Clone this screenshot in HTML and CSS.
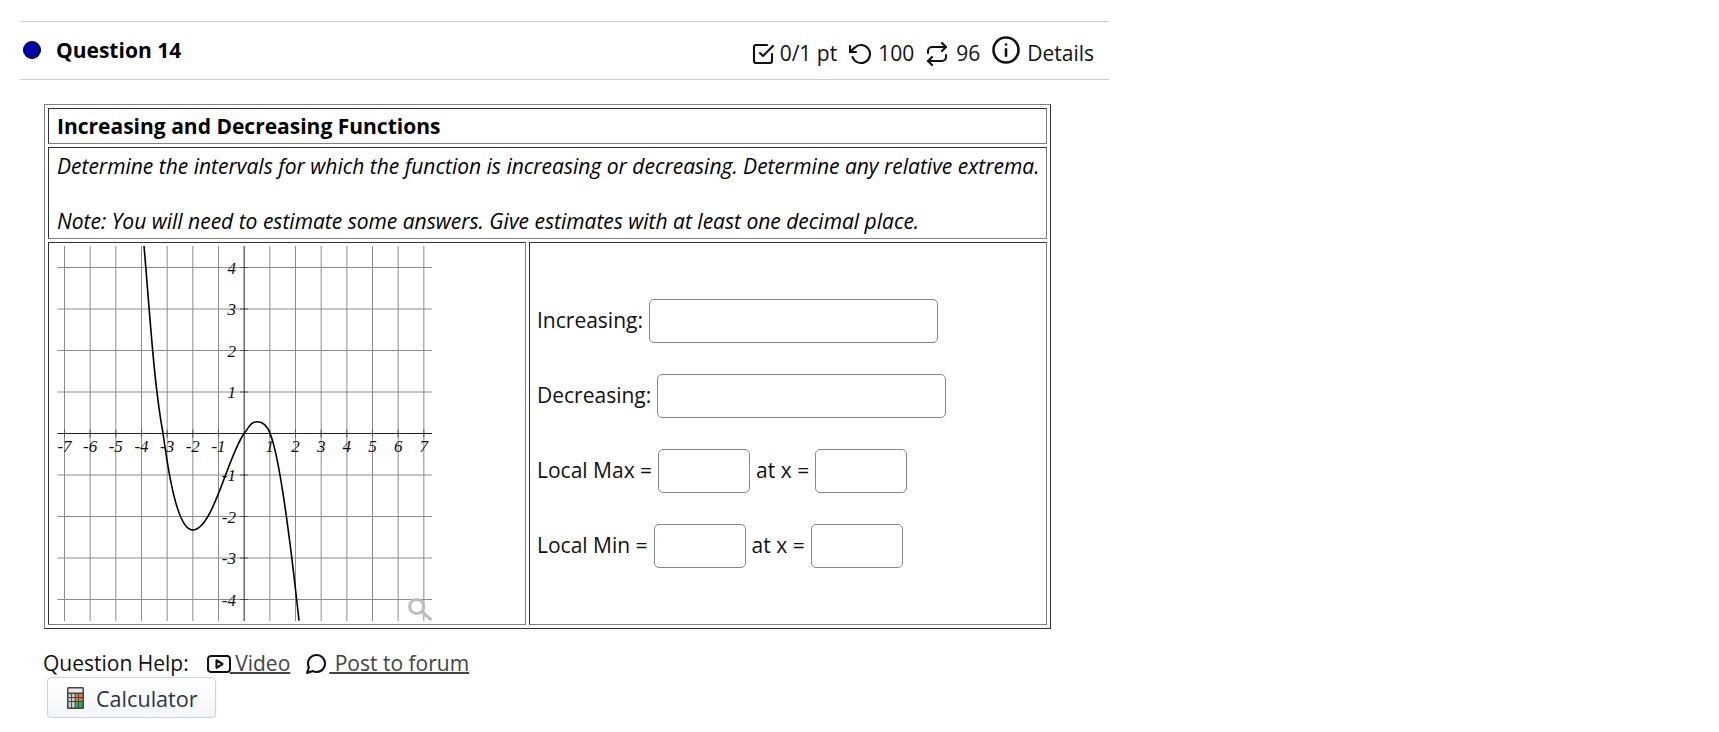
FILE: index.html
```html
<!DOCTYPE html>
<html lang="en">
<head>
<meta charset="utf-8">
<title>Question 14</title>
<link rel="stylesheet" href="styles.css">
</head>
<body>
<main class="page">
  <header class="qhead">
    <div class="qtitle"><span class="dot"></span><span class="qname">Question 14</span></div>
    <div class="qmeta">
      <svg class="ic ic-check" viewBox="0 0 24 24"><polyline points="9 11 12 14 22 4"/><path d="M21 12v7a2 2 0 0 1-2 2H5a2 2 0 0 1-2-2V5a2 2 0 0 1 2-2h11"/></svg>
      <span class="m-pt">0/1 pt</span>
      <svg class="ic ic-undo" viewBox="0 0 24 24"><polyline points="1 4 1 10 7 10"/><path d="M3.51 15a9 9 0 1 0 2.13-9.36L1 10"/></svg>
      <span class="m-tries">100</span>
      <svg class="ic ic-repeat" viewBox="0 0 24 24"><polyline points="17 1 21 5 17 9"/><path d="M3 11V9a4 4 0 0 1 4-4h14"/><polyline points="7 23 3 19 7 15"/><path d="M21 13v2a4 4 0 0 1-4 4H3"/></svg>
      <span class="m-regen">96</span>
      <svg class="ic ic-info" viewBox="0 0 24 24"><circle cx="12" cy="12" r="10"/><line x1="12" y1="16.5" x2="12" y2="11.5"/><line x1="12" y1="7.6" x2="12.01" y2="7.6"/></svg>
      <span>Details</span>
    </div>
  </header>

  <table class="qtable">
    <tr><td colspan="2" class="c-title"><strong>Increasing and Decreasing Functions</strong></td></tr>
    <tr><td colspan="2" class="c-intro"><em>Determine the intervals for which the function is increasing or decreasing. Determine any relative extrema.<br><br>Note: You will need to estimate some answers. Give estimates with at least one decimal place.</em></td></tr>
    <tr>
      <td class="c-graph">
        <svg class="graph" viewBox="49 243 476 381" role="img" aria-label="Graph of a function">
          <g class="grid">
            <path d="M64.5 246V621M90.17 246V621M115.83 246V621M141.5 246V621M167.17 246V621M192.83 246V621M218.5 246V621M269.83 246V621M295.5 246V621M321.17 246V621M346.83 246V621M372.5 246V621M398.17 246V621M423.83 246V621"/>
            <path d="M57.5 267.5H432M57.5 309H432M57.5 350.5H432M57.5 392H432M57.5 475H432M57.5 516.5H432M57.5 558H432M57.5 599.5H432"/>
          </g>
          <g class="ticks">
            <path d="M64.5 429.5v8M90.17 429.5v8M115.83 429.5v8M141.5 429.5v8M167.17 429.5v8M192.83 429.5v8M218.5 429.5v8M269.83 429.5v8M295.5 429.5v8M321.17 429.5v8M346.83 429.5v8M372.5 429.5v8M398.17 429.5v8M423.83 429.5v8"/>
            <path d="M240 267.5h8M240 309h8M240 350.5h8M240 392h8M240 475h8M240 516.5h8M240 558h8M240 599.5h8"/>
          </g>
          <path class="axis" d="M57.5 433.5H432M244.17 246V621"/>
          <g class="xl">
            <text x="64.5" y="452">-7</text><text x="90.2" y="452">-6</text><text x="115.8" y="452">-5</text><text x="141.5" y="452">-4</text><text x="167.2" y="452">-3</text><text x="192.8" y="452">-2</text><text x="218.5" y="452">-1</text><text x="269.8" y="452">1</text><text x="295.5" y="452">2</text><text x="321.2" y="452">3</text><text x="346.8" y="452">4</text><text x="372.5" y="452">5</text><text x="398.2" y="452">6</text><text x="423.8" y="452">7</text>
          </g>
          <g class="yl">
            <text x="236" y="273.5">4</text><text x="236" y="315">3</text><text x="236" y="356.5">2</text><text x="236" y="398">1</text><text x="236" y="481">-1</text><text x="236" y="522.5">-2</text><text x="236" y="564">-3</text><text x="236" y="605.5">-4</text>
          </g>
          <path class="curve" d="M144 246C150 315 154 385 163 433C168 470 177 530 192.7 530C213 530 228 455 244.3 433.3C249 427 251 421.7 257.3 421.7C264 421.7 268 428 270 433.3C277 450 287 510 299 620.7"/>
          <g class="zoom"><circle cx="416.7" cy="606.5" r="7"/><path d="M422 612L431.5 620"/></g>
        </svg>
      </td>
      <td class="c-answers">
        <div class="answers">
          <div class="row"><label>Increasing:</label><input class="wide" type="text"></div>
          <div class="row"><label>Decreasing:</label><input class="wide" type="text"></div>
          <div class="row"><label>Local Max =</label><input class="small" type="text"><span>at x =</span><input class="small" type="text"></div>
          <div class="row"><label>Local Min =</label><input class="small" type="text"><span>at x =</span><input class="small" type="text"></div>
        </div>
      </td>
    </tr>
  </table>

  <div class="help">
    <span class="help-label">Question Help:</span>
    <svg class="ic ic-video" viewBox="0 0 24 18"><rect x="1" y="1" width="22" height="16" rx="3"/><path class="fillp" d="M9.5 5.2L15.5 9L9.5 12.8Z"/></svg><a class="hlink" href="#"> Video</a>
    <svg class="ic ic-forum" viewBox="0 0 24 24"><path d="M21 11.5a8.38 8.38 0 0 1-.9 3.8 8.5 8.5 0 0 1-7.6 4.7 8.38 8.38 0 0 1-3.8-.9L3 21l1.9-5.7a8.38 8.38 0 0 1-.9-3.8 8.5 8.5 0 0 1 4.7-7.6 8.38 8.38 0 0 1 3.8-.9h.5a8.48 8.48 0 0 1 8 8v.5z"/></svg><a class="hlink" href="#"> Post to forum</a>
  </div>
  <button class="calc" type="button">
    <svg class="calc-ic" viewBox="0 0 17 22">
      <rect class="cb" x="0" y="0" width="17" height="22" rx="1.5"/>
      <rect class="cs" x="1.5" y="1.5" width="14" height="4"/>
      <rect class="cg" x="1.5" y="7" width="2.6" height="3"/><rect class="cg" x="5" y="7" width="2.6" height="3"/><rect class="co" x="8.5" y="7" width="2.6" height="3"/><rect class="co" x="12" y="7" width="3.5" height="3"/>
      <rect class="cg" x="1.5" y="11" width="2.6" height="3"/><rect class="cg" x="5" y="11" width="2.6" height="3"/><rect class="co" x="8.5" y="11" width="2.6" height="3"/><rect class="co" x="12" y="11" width="3.5" height="3"/>
      <rect class="cg" x="1.5" y="15" width="2.6" height="5.5"/><rect class="cg" x="5" y="15" width="2.6" height="5.5"/><rect class="cn" x="8.5" y="15" width="2.6" height="5.5"/><rect class="cn" x="12" y="15" width="3.5" height="5.5"/>
    </svg>
    <span class="calc-label">Calculator</span>
  </button>
</main>
</body>
</html>
```
FILE: styles.css
```css
* { box-sizing: border-box; }
html, body { margin: 0; padding: 0; background: #fff; }
body {
  font-family: "Open Sans", "Noto Sans", sans-serif;
  font-size: 21px;
  line-height: 27.5px;
  color: #111;
}
.page { padding: 21px 0 0 20px; width: 1109px; }

.qhead {
  display: flex;
  justify-content: space-between;
  align-items: center;
  height: 59px;
  border-top: 1px solid #ccc;
  border-bottom: 1px solid #ccc;
  padding-right: 15px;
}
.qtitle { display: flex; align-items: center; }
.dot {
  width: 18px; height: 18px;
  margin-left: 3px;
  margin-top: -2px;
  border-radius: 50%;
  background: #0000a8;
  border: 1px solid #000;
}
.qname { margin-left: 15px; font-weight: 700; color: #000; }
.qmeta { display: flex; align-items: center; margin-top: 6px; }
.ic { fill: none; stroke: #111; stroke-width: 2.1; stroke-linecap: round; stroke-linejoin: round; flex: none; }
.ic-check { width: 24px; height: 24px; margin-right: 5px; }
.m-pt { margin-right: 12px; }
.ic-undo { width: 24px; height: 24px; margin-right: 5px; }
.m-tries { margin-right: 11px; }
.ic-repeat { width: 24px; height: 24px; margin-right: 7px; }
.m-regen { margin-right: 11px; }
.ic-info { width: 30px; height: 30px; margin-top: -8px; margin-right: 6px; stroke-width: 2.1; }

.qtable {
  margin: 24px 0 0 24px;
  width: 1007px;
  height: 525px;
  border-collapse: separate;
  border-spacing: 3px;
  border: 1px solid;
  border-color: #808080 #333 #333 #808080;
}
.qtable td {
  border: 1px solid;
  border-color: #333 #808080 #808080 #333;
  padding: 3px 7px;
}
.qtable .c-title { height: 36px; padding: 3px 0 3px 8px; line-height: 27px; color: #000; }
.qtable .c-intro { height: 92px; padding: 5px 0 2px 8px; color: #000; }
.qtable .c-graph { width: 478px; padding: 0; }
.qtable .c-answers { padding: 0 0 0 7px; vertical-align: middle; }
.graph { display: block; width: 476px; height: 381px; }
.grid path { fill: none; stroke: #8c8c8c; stroke-width: 1; }
.ticks path { fill: none; stroke: #555; stroke-width: 1; }
.axis { fill: none; stroke: #222; stroke-width: 1; }
.curve { fill: none; stroke: #000; stroke-width: 1.6; }
.xl text, .yl text {
  font-family: "Liberation Serif", serif;
  font-style: italic;
  font-size: 17px;
  fill: #111;
}
.xl text { text-anchor: middle; }
.yl text { text-anchor: end; }
.zoom circle, .zoom path { fill: none; stroke: #bdbdbd; stroke-width: 3; }

.answers { display: flex; flex-direction: column; gap: 31px; }
.row { display: flex; align-items: center; height: 44px; gap: 6px; }
.row input {
  height: 44px;
  border: 1px solid #888;
  border-radius: 5px;
  background: #fff;
  padding: 0;
}
.wide { width: 289px; }
.small { width: 92px; }

.help { display: flex; align-items: center; margin: 22px 0 0 23px; height: 26px; }
.help-label { margin-right: 18px; }
.ic-video { width: 24px; height: 18px; margin-right: -1px; }
.ic-forum { width: 24px; height: 24px; margin-left: 14px; margin-right: 1px; }
.hlink { color: #444; text-decoration: underline; text-decoration-thickness: 2px; white-space: pre; }
.calc {
  display: flex;
  align-items: center;
  margin: 0 0 0 27px;
  width: 169px;
  height: 41px;
  padding: 0 0 0 19px;
  font: inherit;
  font-size: 21.6px;
  color: #2c3542;
  background: linear-gradient(#fff, #f2f5f8);
  border: 1px solid #ccd5de;
  border-radius: 4px;
  box-shadow: 0 1px 2px rgba(0,0,0,.08);
}
.calc-ic { width: 17px; height: 22px; margin-right: 12px; }
.calc-label { padding-top: 3px; }
.cb { fill: #444; }
.cs { fill: #e8e8e8; }
.cg { fill: #c8ccd0; }
.co { fill: #e07b2c; }
.cn { fill: #2faa55; }
```
